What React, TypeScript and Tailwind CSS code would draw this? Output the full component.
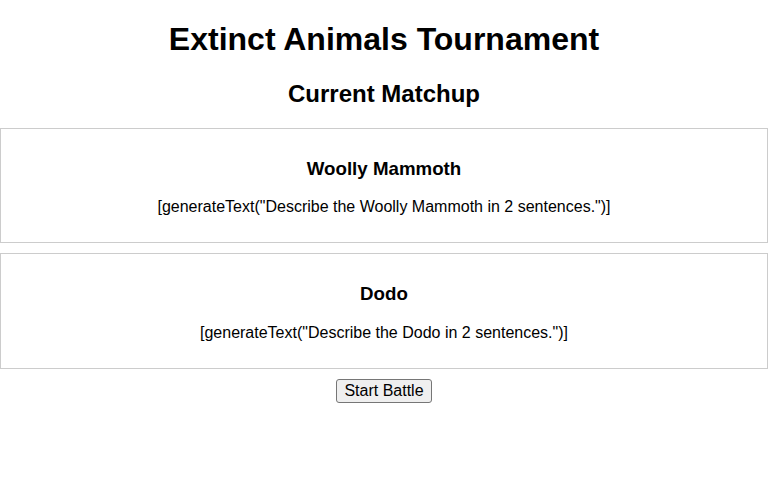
export default function App() {
  const animals = [
    { name: "Woolly Mammoth" },
    { name: "Dodo" },
  ];
  return (
    <div className="font-['Liberation_Sans',Arial,sans-serif] text-black bg-white min-h-[480px] text-center leading-[normal] flow-root">
      <h1 className="text-[32px] font-bold my-[21.44px]">Extinct Animals Tournament</h1>
      <h2 className="text-[24px] font-bold my-[19.92px]">Current Matchup</h2>
      <div>
        {animals.map((a) => (
          <div key={a.name} className="border border-[#ccc] p-[10px] mb-[10px]">
            <h3 className="text-[18.72px] font-bold my-[18.72px]">{a.name}</h3>
            <p className="text-[16px] my-[16px]">
              [generateText("Describe the {a.name} in 2 sentences.")]
            </p>
          </div>
        ))}
      </div>
      <button className="text-[16px] bg-[#efefef] border border-[#767676] rounded-[3px] px-[7px] py-[2px] leading-[normal] text-black">
        Start Battle
      </button>
    </div>
  );
}
